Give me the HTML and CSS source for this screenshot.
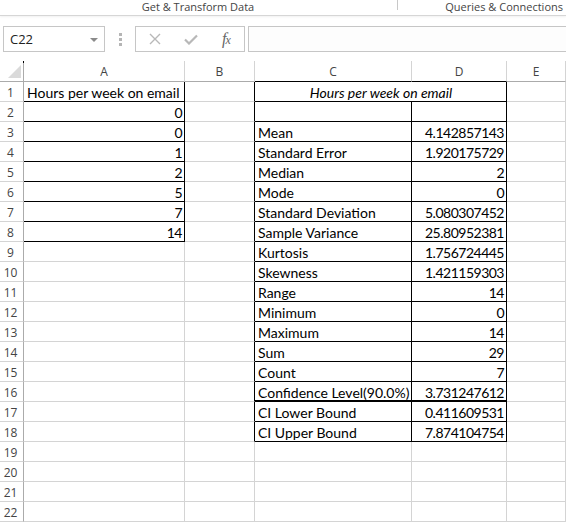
FILE: index.html
```html
<!DOCTYPE html>
<html>
<head>
<meta charset="utf-8">
<link rel="stylesheet" href="styles.css">
</head>
<body>
<div class="ribbon">
  <div class="rib-left">Get &amp; Transform Data</div>
  <div class="rib-right">Queries &amp; Connections</div>
</div>
<div class="fbar">
  <div class="namebox">
    <span class="nb-text">C22</span>
    <svg class="nb-arrow" width="8" height="4" viewBox="0 0 8 4"><polygon points="0,0 8,0 4,4" fill="#8a8a8a"/></svg>
  </div>
  <div class="dots">
    <svg width="3" height="13" viewBox="0 0 3 13"><rect x="0" y="0" width="3" height="3" fill="#b5b5b5"/><rect x="0" y="5" width="3" height="3" fill="#b5b5b5"/><rect x="0" y="10" width="3" height="3" fill="#b5b5b5"/></svg>
  </div>
  <div class="btnbox">
    <svg class="ic-x" width="12" height="12" viewBox="0 0 12 12"><path d="M1 1 L11 11 M11 1 L1 11" stroke="#b8b8b8" stroke-width="1.4" fill="none"/></svg>
    <svg class="ic-ok" width="14" height="11" viewBox="0 0 14 11"><path d="M1 5.5 L5 9.5 L13 1.5" stroke="#b8b8b8" stroke-width="2.2" fill="none"/></svg>
    <span class="fx"><i>f</i><i class="fx-x">x</i></span>
  </div>
  <div class="finput"></div>
</div>
<div class="sheet">
  <div class="hd corner"><svg width="13" height="13" viewBox="0 0 13 13"><polygon points="13,0 13,13 0,13" fill="#dadada"/></svg><span class="tick"></span></div>
  <div class="hd col">A</div>
  <div class="hd col">B</div>
  <div class="hd col kb">C</div>
  <div class="hd col kb">D</div>
  <div class="hd col">E</div>

  <div class="hd row">1</div><div class="c kr kb">Hours per week on email</div><div class="c kr"></div><div class="c span2 kr kb title">Hours per week on email</div><div class="c"></div>
  <div class="hd row">2</div><div class="c kr kb num">0</div><div class="c kr"></div><div class="c kr kb"></div><div class="c kr kb num"></div><div class="c"></div>
  <div class="hd row">3</div><div class="c kr kb num">0</div><div class="c kr"></div><div class="c kr kb">Mean</div><div class="c kr kb num">4.142857143</div><div class="c"></div>
  <div class="hd row">4</div><div class="c kr kb num">1</div><div class="c kr"></div><div class="c kr kb">Standard Error</div><div class="c kr kb num">1.920175729</div><div class="c"></div>
  <div class="hd row">5</div><div class="c kr kb num">2</div><div class="c kr"></div><div class="c kr kb">Median</div><div class="c kr kb num">2</div><div class="c"></div>
  <div class="hd row">6</div><div class="c kr kb num">5</div><div class="c kr"></div><div class="c kr kb">Mode</div><div class="c kr kb num">0</div><div class="c"></div>
  <div class="hd row">7</div><div class="c kr kb num">7</div><div class="c kr"></div><div class="c kr kb">Standard Deviation</div><div class="c kr kb num">5.080307452</div><div class="c"></div>
  <div class="hd row">8</div><div class="c kr kb num">14</div><div class="c kr"></div><div class="c kr kb">Sample Variance</div><div class="c kr kb num">25.80952381</div><div class="c"></div>
  <div class="hd row">9</div><div class="c"></div><div class="c kr"></div><div class="c kr kb">Kurtosis</div><div class="c kr kb num">1.756724445</div><div class="c"></div>
  <div class="hd row">10</div><div class="c"></div><div class="c kr"></div><div class="c kr kb">Skewness</div><div class="c kr kb num">1.421159303</div><div class="c"></div>
  <div class="hd row">11</div><div class="c"></div><div class="c kr"></div><div class="c kr kb">Range</div><div class="c kr kb num">14</div><div class="c"></div>
  <div class="hd row">12</div><div class="c"></div><div class="c kr"></div><div class="c kr kb">Minimum</div><div class="c kr kb num">0</div><div class="c"></div>
  <div class="hd row">13</div><div class="c"></div><div class="c kr"></div><div class="c kr kb">Maximum</div><div class="c kr kb num">14</div><div class="c"></div>
  <div class="hd row">14</div><div class="c"></div><div class="c kr"></div><div class="c kr kb">Sum</div><div class="c kr kb num">29</div><div class="c"></div>
  <div class="hd row">15</div><div class="c"></div><div class="c kr"></div><div class="c kr kb">Count</div><div class="c kr kb num">7</div><div class="c"></div>
  <div class="hd row">16</div><div class="c"></div><div class="c kr"></div><div class="c kr kb thick">Confidence Level(90.0%)</div><div class="c kr kb thick num">3.731247612</div><div class="c"></div>
  <div class="hd row">17</div><div class="c"></div><div class="c kr"></div><div class="c kr kb">CI Lower Bound</div><div class="c kr kb num">0.411609531</div><div class="c"></div>
  <div class="hd row">18</div><div class="c"></div><div class="c kr"></div><div class="c kr kb">CI Upper Bound</div><div class="c kr kb num">7.874104754</div><div class="c"></div>
  <div class="hd row">19</div><div class="c"></div><div class="c"></div><div class="c"></div><div class="c"></div><div class="c"></div>
  <div class="hd row">20</div><div class="c"></div><div class="c"></div><div class="c"></div><div class="c"></div><div class="c"></div>
  <div class="hd row">21</div><div class="c"></div><div class="c"></div><div class="c"></div><div class="c"></div><div class="c"></div>
  <div class="hd row">22</div><div class="c"></div><div class="c"></div><div class="c"></div><div class="c"></div><div class="c"></div>
</div>
</body>
</html>
```
FILE: styles.css
```css
* { box-sizing: border-box; }
html, body { margin: 0; padding: 0; background: #ffffff; }
body { width: 566px; height: 524px; overflow: hidden; font-family: "Open Sans", "Noto Sans", sans-serif; }

.ribbon {
  height: 16px;
  display: flex;
  border-bottom: 1px solid #d6d6d6;
  box-shadow: 0 1px 2px rgba(0,0,0,0.06);
  font-size: 11px;
  color: #444444;
  line-height: 13px;
}
.rib-left {
  width: 398px;
  text-align: center;
  border-right: 1px solid #c8c8c8;
  height: 10px;
  padding-right: 1px;
}
.rib-right {
  flex: 1;
  text-align: right;
  padding-right: 3px;
}

.fbar {
  display: flex;
  align-items: center;
  margin-top: 10px;
  height: 26px;
}
.namebox {
  margin-left: 3px;
  width: 102px;
  height: 26px;
  border: 1px solid #c6c6c6;
  display: flex;
  align-items: center;
  justify-content: space-between;
  padding: 0 6px 0 6px;
  font-family: "Open Sans", sans-serif;
  font-size: 13px;
  color: #222222;
}
.nb-arrow { margin-top: 1px; }
.dots {
  width: 30px;
  display: flex;
  justify-content: center;
  padding-top: 1px;
}
.btnbox {
  width: 110px;
  height: 26px;
  border: 1px solid #c6c6c6;
  display: flex;
  align-items: center;
  padding-left: 13px;
}
.ic-x { margin-right: 23px; }
.ic-ok { margin-right: 24px; }
.fx {
  font-family: "Liberation Serif", "DejaVu Serif", serif;
  font-size: 16px;
  color: #666666;
  letter-spacing: -1px;
}
.fx-x { font-size: 12px; }
.finput {
  margin-left: 3px;
  flex: 1;
  height: 26px;
  border: 1px solid #c6c6c6;
  border-right: none;
  background: #fdfdfd;
}

.sheet {
  margin-top: 9px;
  display: grid;
  grid-template-columns: 24px 161px 70px 157px 95px 1fr;
  grid-template-rows: 21px;
  grid-auto-rows: 20px;
  font-family: "Lato", "Liberation Sans", sans-serif;
  font-size: 14px;
  color: #000000;
}
.c {
  border-right: 1px solid #d4d4d4;
  border-bottom: 1px solid #d4d4d4;
  padding: 1px 2px 0 3px;
  line-height: 19px;
  white-space: nowrap;
  overflow: hidden;
}
.num { text-align: right; padding-right: 2px; letter-spacing: -0.5px; }
.kr { border-right-color: #000000; }
.kb { border-bottom-color: #000000; }
.thick { border-bottom-width: 2px; }
.span2 { grid-column: span 2; }
.title { font-style: italic; text-align: center; }

.hd {
  font-family: "Open Sans", "Noto Sans", sans-serif;
  font-size: 12px;
  color: #444444;
  border-right: 1px solid #d4d4d4;
  border-bottom: 1px solid #d4d4d4;
  text-align: center;
  line-height: 19px;
  padding-top: 1px;
}
.hd.col { border-bottom-color: #ababab; }
.hd.col.kb { border-bottom-color: #000000; }
.hd.row { border-right-color: #ababab; padding-right: 2px; }
.corner {
  position: relative;
  border-right-color: #ababab;
  border-bottom-color: #ababab;
}
.corner svg { position: absolute; left: 8px; bottom: 3px; }
.tick {
  position: absolute;
  right: -1px;
  top: 0;
  width: 1px;
  height: 2px;
  background: #000000;
}
```
